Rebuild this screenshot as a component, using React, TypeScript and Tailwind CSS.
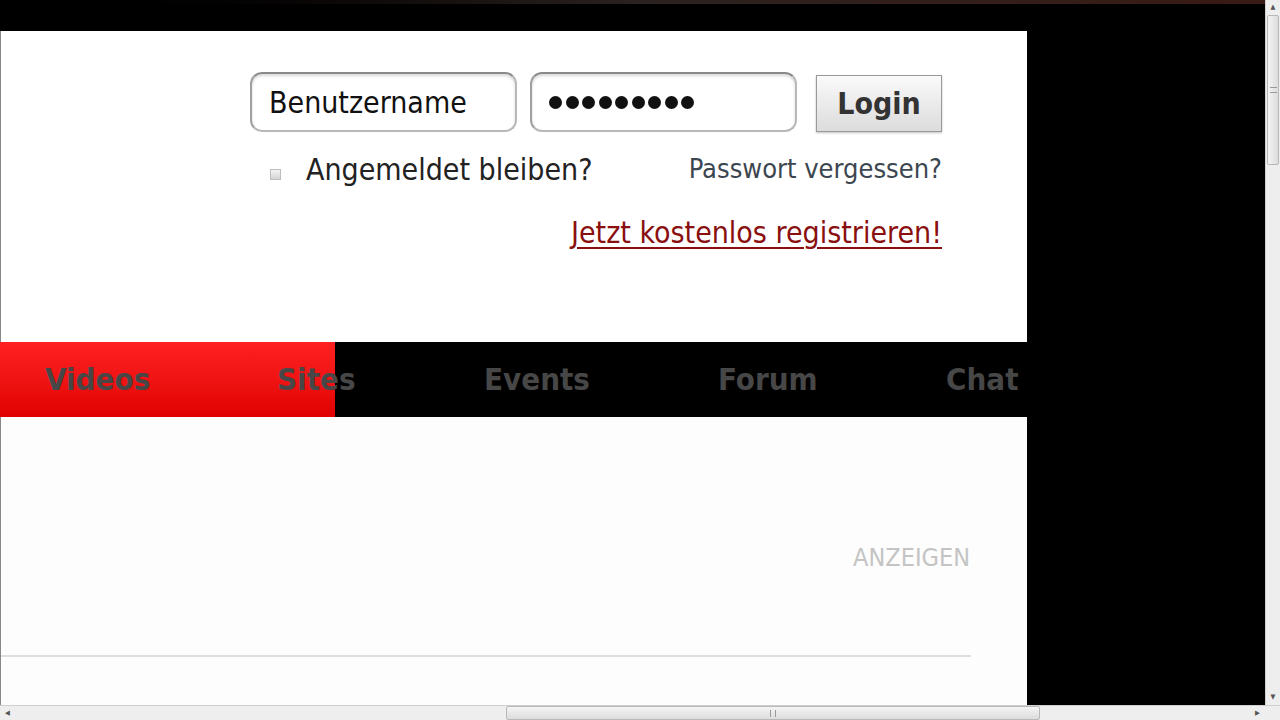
import React from "react";

const font = { fontFamily: '"DejaVu Sans Condensed", "DejaVu Sans", Tahoma, sans-serif' };

const Dot = () => <div className="w-[13px] h-[13px] rounded-full bg-[#111]" />;

export default function App() {
  return (
    <div className="w-[1280px] h-[720px] flex flex-col bg-black overflow-hidden" style={font}>
      <div className="flex flex-1 min-h-0">
        <div className="flex-1 flex flex-col bg-black">
          <div className="h-[31px] flex flex-col">
            <div className="h-[4px] bg-gradient-to-r from-[#000] via-[#2a2220] to-[#3a1a14]" />
          </div>
          <div className="w-[1027px] h-[311px] bg-white border-l border-[#888] flex flex-col items-end pr-[85px] pt-[41px]">
            <div className="flex items-center">
              <div className="w-[267px] h-[60px] rounded-[12px] border-2 border-[#b8b8b8] border-t-[#8a8a8a] border-l-[#a0a0a0] shadow-[inset_0_2px_3px_rgba(0,0,0,0.15)] flex items-center pl-[17px] text-[30px] text-[#111]">
                Benutzername
              </div>
              <div className="ml-[13px] w-[267px] h-[60px] rounded-[12px] border-2 border-[#b8b8b8] border-t-[#8a8a8a] border-l-[#a0a0a0] shadow-[inset_0_2px_3px_rgba(0,0,0,0.15)] flex items-center pl-[17px] gap-[3.5px]">
                <Dot /><Dot /><Dot /><Dot /><Dot /><Dot /><Dot /><Dot /><Dot />
              </div>
              <div className="ml-[19px] w-[126px] h-[57px] mt-[3px] border border-[#9a9a9a] bg-gradient-to-b from-[#fafafa] to-[#dcdcdc] shadow-[0_1px_2px_rgba(0,0,0,0.25)] flex items-center justify-center text-[30px] font-bold text-[#333]">
                Login
              </div>
            </div>
            <div className="w-[690px] flex items-center justify-between mt-[20px]">
              <div className="flex items-center">
                <div className="ml-[18px] mt-[4px] w-[11px] h-[11px] border border-[#bdbdbd] bg-gradient-to-b from-[#f4f4f4] to-[#d4d4d4]" />
                <span className="ml-[25px] text-[30px] text-[#222] -mt-[5px]">Angemeldet bleiben?</span>
              </div>
              <span className="text-[27px] text-[#3c4650] -mt-[6px]">Passwort vergessen?</span>
            </div>
            <div className="mt-[18px] text-[30px] text-[#8a0f0f] underline decoration-[2px] underline-offset-[4px]">
              Jetzt kostenlos registrieren!
            </div>
          </div>
          <div className="w-[1027px] h-[75px] flex">
            <div className="w-[335px] h-full bg-gradient-to-b from-[#ff2020] to-[#e00000] shrink-0" />
            <div className="flex-1 bg-black" />
          </div>
          <div className="w-[1027px] h-[75px] -mt-[75px] flex items-center font-bold text-[31px] text-[#474747] relative">
            <span className="absolute left-[45px]">Videos</span>
            <span className="absolute left-[277px]">Sites</span>
            <span className="absolute left-[484px]">Events</span>
            <span className="absolute left-[718px]">Forum</span>
            <span className="absolute left-[946px]">Chat</span>
          </div>
          <div className="w-[1027px] flex-1 bg-[#fdfdfd] border-l border-[#888] flex flex-col pr-[57px] pt-[122px]">
            <div className="self-end text-[25px] text-[#c4c4c4]">ANZEIGEN</div>
            <div className="mt-[78px] h-[2px] bg-[#dedede] w-[970px]" />
          </div>
        </div>
        <div className="w-[15px] bg-[#eeeeee] border-l border-[#cfcfcf] flex flex-col">
          <div className="h-[15px] flex items-center justify-center text-[7px] text-[#555]">▲</div>
          <div className="h-[150px] mx-[1px] rounded-[2px] border border-[#b8b8b8] bg-gradient-to-r from-[#f4f4f4] to-[#dcdcdc] flex items-center justify-center">
            <div className="w-[7px] h-[6px] border-y border-[#999]" />
          </div>
          <div className="flex-1" />
          <div className="h-[15px] flex items-center justify-center text-[7px] text-[#555]">▼</div>
        </div>
      </div>
      <div className="h-[15px] bg-[#eeeeee] border-t border-[#cfcfcf] flex">
        <div className="w-[15px] flex items-center justify-center text-[7px] text-[#555]">◀</div>
        <div className="w-[491px]" />
        <div className="w-[534px] rounded-[2px] border border-[#b8b8b8] bg-gradient-to-b from-[#f4f4f4] to-[#dcdcdc] flex items-center justify-center">
          <div className="w-[6px] h-[7px] border-x border-[#999]" />
        </div>
        <div className="flex-1" />
        <div className="w-[15px] flex items-center justify-center text-[7px] text-[#555]">▶</div>
        <div className="w-[15px] bg-[#eeeeee]" />
      </div>
    </div>
  );
}
